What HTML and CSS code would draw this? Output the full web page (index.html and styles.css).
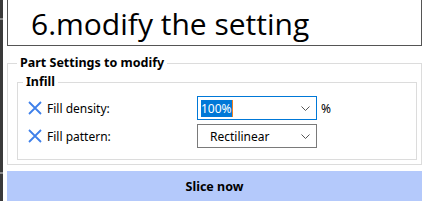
FILE: index.html
```html
<!DOCTYPE html>
<html lang="en">
<head>
  <meta charset="UTF-8">
  <title>Modify the setting</title>
  <link rel="stylesheet" href="styles.css">
</head>
<body>
  <div class="page">
    <div class="edge">
      <span class="edge-seg top"></span>
      <span class="edge-seg mid"></span>
      <span class="edge-seg bottom"></span>
    </div>

    <div class="main">
      <div class="title-box">
        <h1>6.modify the setting</h1>
      </div>

      <fieldset class="group">
        <legend>Part Settings to modify</legend>
        <fieldset class="group inner">
          <legend>Infill</legend>

          <div class="setting-row">
            <span class="remove-icon">
              <svg width="14" height="14" viewBox="0 0 14 14"><path d="M1 1 L13 13 M13 1 L1 13" stroke="#3f80ea" stroke-width="1.8" fill="none"/></svg>
            </span>
            <span class="label">Fill density:</span>
            <div class="combo active">
              <span class="value"><span class="selected">100%</span><span class="caret"></span></span>
              <svg class="chevron" width="9" height="5" viewBox="0 0 9 5"><path d="M0.5 0.5 L4.5 4.5 L8.5 0.5" stroke="#555" fill="none"/></svg>
            </div>
            <span class="unit">%</span>
          </div>

          <div class="setting-row">
            <span class="remove-icon">
              <svg width="14" height="14" viewBox="0 0 14 14"><path d="M1 1 L13 13 M13 1 L1 13" stroke="#3f80ea" stroke-width="1.8" fill="none"/></svg>
            </span>
            <span class="label">Fill pattern:</span>
            <div class="combo">
              <span class="value indent">Rectilinear</span>
              <svg class="chevron" width="9" height="5" viewBox="0 0 9 5"><path d="M0.5 0.5 L4.5 4.5 L8.5 0.5" stroke="#555" fill="none"/></svg>
            </div>
          </div>
        </fieldset>
      </fieldset>

      <div class="slice-btn">Slice now</div>
    </div>
  </div>
</body>
</html>
```

FILE: styles.css
```css
* {
  margin: 0;
  padding: 0;
  box-sizing: border-box;
}

body {
  font-family: "Noto Sans", "Open Sans", sans-serif;
  font-size: 12px;
  color: #000;
  background-color: #fff;
  width: 422px;
  height: 201px;
  overflow: hidden;
}

.page {
  display: flex;
  height: 201px;
}

/* dark window edge on the left */
.edge {
  width: 3px;
  display: flex;
  flex-direction: column;
  gap: 2px;
  background-color: #8a8a8a;
}

.edge-seg {
  display: block;
  background-color: #3a3a3a;
}

.edge-seg.top {
  height: 18px;
}

.edge-seg.mid {
  height: 152px;
}

.edge-seg.bottom {
  flex: 1;
}

.main {
  flex: 1;
  margin-left: 4px;
  display: flex;
  flex-direction: column;
}

.title-box {
  height: 46px;
  border: 1px solid #555;
  border-top: none;
  padding-left: 23px;
}

.title-box h1 {
  font-family: "Open Sans", sans-serif;
  font-weight: normal;
  font-size: 30px;
  line-height: 40px;
  margin-top: 4px;
}

.group {
  border: 1px solid #dcdcdc;
  padding: 0 4px 4px 9px;
  margin-top: 8px;
}

.group legend {
  font-weight: bold;
  font-size: 12.5px;
  padding: 0 3px;
  line-height: 18px;
}

.group.inner {
  margin-top: 1px;
  padding: 1px 0 11px 5px;
}

.setting-row {
  display: flex;
  align-items: center;
  height: 24px;
  margin-top: 4px;
}

.remove-icon {
  width: 14px;
  height: 14px;
  margin-left: 5px;
  display: flex;
}

.label {
  margin-left: 5px;
  width: 150px;
}

.combo {
  width: 120px;
  height: 24px;
  border: 1px solid #7a7a7a;
  display: flex;
  align-items: center;
  justify-content: space-between;
  padding: 0 6px 0 3px;
}

.combo.active {
  border-color: #0078d7;
}

.value {
  display: flex;
  align-items: center;
}

.value.indent {
  padding-left: 9px;
}

.selected {
  background-color: #0078d7;
  color: #fff;
  line-height: 17px;
}

.caret {
  width: 1px;
  height: 17px;
  background-color: #f08020;
}

.unit {
  margin-left: 4px;
}

.slice-btn {
  margin-top: 6px;
  flex: 1;
  background-color: #b4c9fb;
  font-weight: bold;
  font-size: 12.5px;
  display: flex;
  align-items: center;
  justify-content: center;
}
```
